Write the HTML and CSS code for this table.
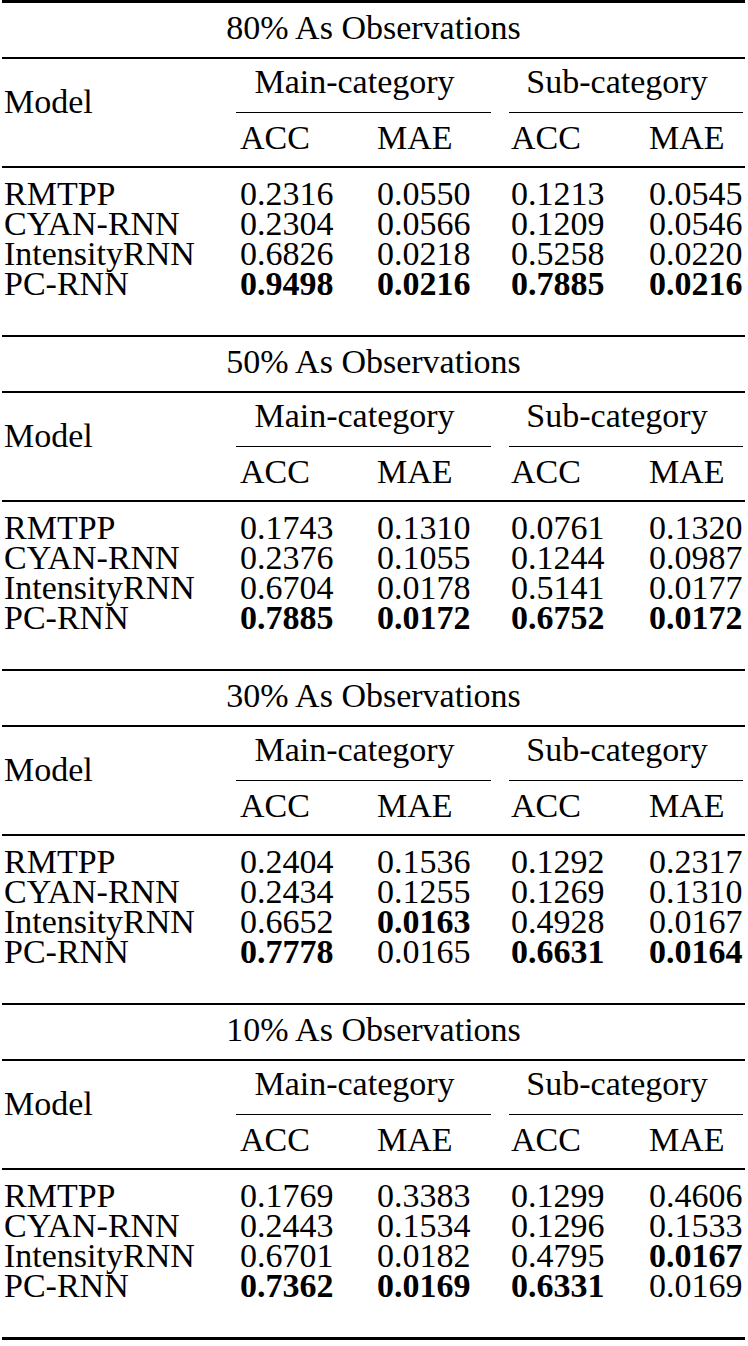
FILE: index.html
```html
<!DOCTYPE html>
<html>

<head>
	<meta charset="UTF-8">
	<title>Observation results</title>
	<link rel="stylesheet" href="styles.css">
</head>

<body>
	<div class="results">
		<section class="block">
			<div class="title">80% As Observations</div>
			<div class="head">
				<div class="model">Model</div>
				<div class="group main-group">Main-category</div>
				<div class="group sub-group">Sub-category</div>
				<div class="metric c2">ACC</div>
				<div class="metric c3">MAE</div>
				<div class="metric c4">ACC</div>
				<div class="metric c5">MAE</div>
			</div>
			<div class="rows">
				<div class="name">RMTPP</div><div>0.2316</div><div>0.0550</div><div>0.1213</div><div>0.0545</div>
				<div class="name">CYAN-RNN</div><div>0.2304</div><div>0.0566</div><div>0.1209</div><div>0.0546</div>
				<div class="name">IntensityRNN</div><div>0.6826</div><div>0.0218</div><div>0.5258</div><div>0.0220</div>
				<div class="name">PC-RNN</div><div class="best">0.9498</div><div class="best">0.0216</div><div class="best">0.7885</div><div class="best">0.0216</div>
			</div>
		</section>
		<section class="block">
			<div class="title">50% As Observations</div>
			<div class="head">
				<div class="model">Model</div>
				<div class="group main-group">Main-category</div>
				<div class="group sub-group">Sub-category</div>
				<div class="metric c2">ACC</div>
				<div class="metric c3">MAE</div>
				<div class="metric c4">ACC</div>
				<div class="metric c5">MAE</div>
			</div>
			<div class="rows">
				<div class="name">RMTPP</div><div>0.1743</div><div>0.1310</div><div>0.0761</div><div>0.1320</div>
				<div class="name">CYAN-RNN</div><div>0.2376</div><div>0.1055</div><div>0.1244</div><div>0.0987</div>
				<div class="name">IntensityRNN</div><div>0.6704</div><div>0.0178</div><div>0.5141</div><div>0.0177</div>
				<div class="name">PC-RNN</div><div class="best">0.7885</div><div class="best">0.0172</div><div class="best">0.6752</div><div class="best">0.0172</div>
			</div>
		</section>
		<section class="block">
			<div class="title">30% As Observations</div>
			<div class="head">
				<div class="model">Model</div>
				<div class="group main-group">Main-category</div>
				<div class="group sub-group">Sub-category</div>
				<div class="metric c2">ACC</div>
				<div class="metric c3">MAE</div>
				<div class="metric c4">ACC</div>
				<div class="metric c5">MAE</div>
			</div>
			<div class="rows">
				<div class="name">RMTPP</div><div>0.2404</div><div>0.1536</div><div>0.1292</div><div>0.2317</div>
				<div class="name">CYAN-RNN</div><div>0.2434</div><div>0.1255</div><div>0.1269</div><div>0.1310</div>
				<div class="name">IntensityRNN</div><div>0.6652</div><div class="best">0.0163</div><div>0.4928</div><div>0.0167</div>
				<div class="name">PC-RNN</div><div class="best">0.7778</div><div>0.0165</div><div class="best">0.6631</div><div class="best">0.0164</div>
			</div>
		</section>
		<section class="block">
			<div class="title">10% As Observations</div>
			<div class="head">
				<div class="model">Model</div>
				<div class="group main-group">Main-category</div>
				<div class="group sub-group">Sub-category</div>
				<div class="metric c2">ACC</div>
				<div class="metric c3">MAE</div>
				<div class="metric c4">ACC</div>
				<div class="metric c5">MAE</div>
			</div>
			<div class="rows">
				<div class="name">RMTPP</div><div>0.1769</div><div>0.3383</div><div>0.1299</div><div>0.4606</div>
				<div class="name">CYAN-RNN</div><div>0.2443</div><div>0.1534</div><div>0.1296</div><div>0.1533</div>
				<div class="name">IntensityRNN</div><div>0.6701</div><div>0.0182</div><div>0.4795</div><div class="best">0.0167</div>
				<div class="name">PC-RNN</div><div class="best">0.7362</div><div class="best">0.0169</div><div class="best">0.6331</div><div>0.0169</div>
			</div>
		</section>
	</div>
</body>

</html>
```

FILE: styles.css
```css
body {
	margin: 0;
	background: #ffffff;
	color: #000000;
	font-family: "Liberation Serif", "Times New Roman", serif;
	font-size: 34px;
	line-height: 30px;
}
.results {
	margin-left: 2px;
	width: 743px;
	border-top: 3px solid #000;
	border-bottom: 3px solid #000;
}
.block + .block {
	border-top: 2px solid #000;
}
.title {
	text-align: center;
	padding: 10px 0 14px 0;
	border-bottom: 2px solid #000;
}
.head {
	display: grid;
	grid-template-columns: 234px 137px 134px 138px 1fr;
	grid-template-rows: 54px 53px;
	border-bottom: 2px solid #000;
}
.model {
	grid-column: 1;
	grid-row: 1 / 3;
	padding: 28px 0 0 2px;
}
.group {
	grid-row: 1;
	padding: 8px 18px 0 0;
	text-align: center;
	border-bottom: 1px solid #000;
	align-self: stretch;
	box-sizing: border-box;
	height: 54px;
}
.main-group {
	grid-column: 2 / 4;
	margin-right: 16px;
}
.sub-group {
	grid-column: 4 / 6;
	margin: 0 2px 0 2px;
}
.metric {
	grid-row: 2;
	padding: 10px 0 0 4px;
}
.c2 { grid-column: 2; }
.c3 { grid-column: 3; }
.c4 { grid-column: 4; }
.c5 { grid-column: 5; }
.rows {
	display: grid;
	grid-template-columns: 234px 137px 134px 138px 1fr;
	grid-auto-rows: 30px;
	padding: 11px 0 36px 0;
}
.rows div {
	padding-left: 4px;
	white-space: nowrap;
}
.rows .name {
	padding-left: 2px;
}
.best {
	font-weight: bold;
}
```
